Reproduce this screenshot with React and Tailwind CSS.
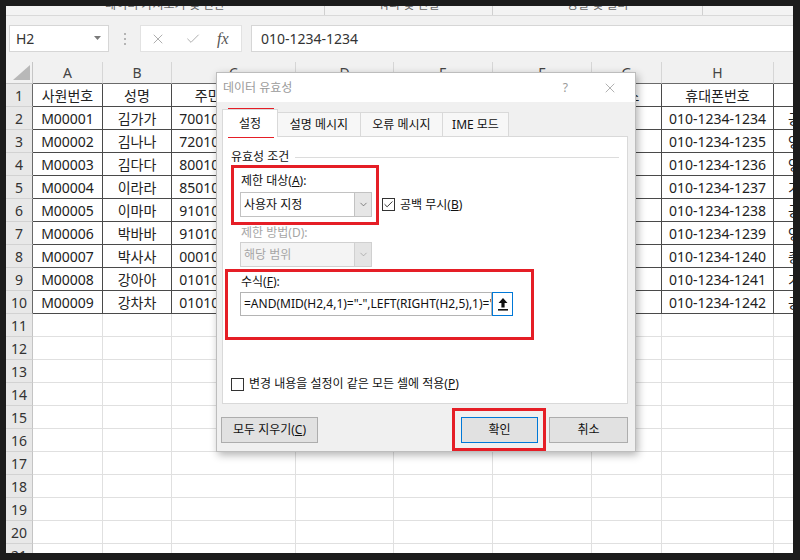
import { X, Check, ChevronDown } from 'lucide-react'

const colW = ['w-[70px]', 'w-[69px]', 'w-[124px]', 'w-[98px]', 'w-[99px]', 'w-[99px]', 'w-[70px]', 'w-[112px]', 'w-[90px]']
const letters = ['A', 'B', 'C', 'D', 'E', 'F', 'G', 'H', 'I']

const data = [
  ['사원번호', '성명', '주민등록번호', '부서', '직급', '입사일', '주소', '휴대폰번호', ''],
  ['M00001', '김가가', '700101-1234567', '', '', '', '', '010-1234-1234', '공무팀'],
  ['M00002', '김나나', '720101-2234567', '', '', '', '', '010-1234-1235', '영업팀'],
  ['M00003', '김다다', '800101-1234567', '', '', '', '', '010-1234-1236', '영업팀'],
  ['M00004', '이라라', '850101-2234567', '', '', '', '', '010-1234-1237', '기획팀'],
  ['M00005', '이마마', '910101-1234567', '', '', '', '', '010-1234-1238', '공무팀'],
  ['M00006', '박바바', '910101-2234567', '', '', '', '', '010-1234-1239', '영업팀'],
  ['M00007', '박사사', '000101-3234567', '', '', '', '', '010-1234-1240', '총무팀'],
  ['M00008', '강아아', '010101-4234567', '', '', '', '', '010-1234-1241', '기획팀'],
  ['M00009', '강차차', '010101-3234567', '', '', '', '', '010-1234-1242', '공무팀'],
]

function Grid() {
  const rows = []
  for (let r = 1; r <= 21; r++) {
    const inTable = r <= 10
    const vals = data[r - 1] || []
    rows.push(
      <div key={r} className="flex h-[23px] shrink-0">
        <div className={`w-[27px] shrink-0 bg-[#e8e8e8] border-b border-[#d2d2d2] border-r flex items-center justify-center text-[14px] text-[#333] ${inTable ? 'border-r-[#6a6a6a]' : 'border-r-[#c4c4c4]'}`}>
          {r}
        </div>
        {colW.map((w, i) => (
          <div
            key={i}
            className={`${w} shrink-0 border-r border-b flex items-center whitespace-nowrap overflow-hidden text-[14px] text-[#222] ${inTable ? 'border-[#4a4a4a]' : 'border-[#e0e0e0]'} ${i === 8 ? 'justify-start pl-[14px]' : 'justify-center'}`}
          >
            {vals[i] || ''}
          </div>
        ))}
      </div>
    )
  }

  return (
    <div className="flex flex-col">
      {/* column headers */}
      <div className="flex h-[22px] shrink-0 bg-[#f1f1f1]">
        <div className="w-[27px] shrink-0 border-r border-b border-[#c6c6c6] relative">
          <svg width="27" height="21" className="absolute left-0 top-0">
            <polygon points="24,3 24,18 7,18" fill="#b8b8b8" />
          </svg>
        </div>
        {colW.map((w, i) => (
          <div key={i} className={`${w} shrink-0 border-r border-[#d6d6d6] border-b border-b-[#6a6a6a] flex items-center justify-center text-[14px] text-[#444]`}>
            {letters[i]}
          </div>
        ))}
      </div>
      {rows}
    </div>
  )
}

function FormulaBar() {
  return (
    <div className="h-[46px] shrink-0 bg-[#f1f1f1] flex items-start pt-[9px] pl-[3px]">
      <div className="w-[100px] h-[27px] bg-white border border-[#d6d6d6] flex items-center pl-[6px] pr-[6px]">
        <span className="text-[14px] text-[#333]">H2</span>
        <svg width="8" height="5" className="ml-auto">
          <polygon points="0,0 7,0 3.5,4" fill="#7a7a7a" />
        </svg>
      </div>
      <div className="w-[31px] h-[27px] flex items-center justify-center">
        <div className="flex flex-col gap-[3px]">
          <div className="w-[2px] h-[2px] bg-[#b4b4b4]" />
          <div className="w-[2px] h-[2px] bg-[#b4b4b4]" />
          <div className="w-[2px] h-[2px] bg-[#b4b4b4]" />
        </div>
      </div>
      <div className="w-[102px] h-[27px] bg-white border border-[#e2e2e2] flex items-center">
        <X className="w-[16px] h-[16px] ml-[9px] text-[#a8a8a8]" strokeWidth={1.4} />
        <Check className="w-[16px] h-[16px] ml-[19px] text-[#a8a8a8]" strokeWidth={1.4} />
        <span className="ml-[16px] font-['Liberation_Serif',serif] italic text-[16px] text-[#555]">fx</span>
      </div>
      <div className="ml-[9px] flex-1 h-[27px] bg-white border border-[#d6d6d6] border-r-0 flex items-center pl-[9px] text-[14px] text-[#333]">
        010-1234-1234
      </div>
    </div>
  )
}

function RibbonStrip() {
  return (
    <div className="h-[10px] shrink-0 bg-[#f3f3f3] border-b border-[#d9d9d9] overflow-hidden flex text-[12px] text-[#666]">
      <div className="w-[319px] shrink-0 border-r border-[#d0d0d0] flex justify-center">
        <span className="-mt-[9px] leading-[16px]">데이터 가져오기 및 변환</span>
      </div>
      <div className="w-[168px] shrink-0 border-r border-[#d0d0d0] flex justify-center">
        <span className="-mt-[9px] leading-[16px]">쿼리 및 연결</span>
      </div>
      <div className="w-[210px] shrink-0 border-r border-[#d0d0d0] flex justify-center">
        <span className="-mt-[9px] leading-[16px]">정렬 및 필터</span>
      </div>
    </div>
  )
}

function Select({ text, disabled }) {
  return (
    <div className={`flex h-[25px] w-[132px] border ${disabled ? 'border-[#d0d0d0] bg-[#f4f4f4]' : 'border-[#c2c2c2] bg-white'}`}>
      <div className={`flex-1 flex items-center pl-[3px] ${disabled ? 'text-[#a6a6a6]' : 'text-[#111]'}`}>{text}</div>
      <div className={`w-[17px] border-l flex items-center justify-center ${disabled ? 'border-[#d0d0d0] bg-[#e4e4e4]' : 'border-[#c2c2c2] bg-[#e6e6e6]'}`}>
        <ChevronDown className={`w-[11px] h-[11px] ${disabled ? 'text-[#9a9a9a]' : 'text-[#555]'}`} strokeWidth={1.5} />
      </div>
    </div>
  )
}

function Dialog() {
  return (
    <div className="absolute left-[216px] top-[72px] w-[420px] bg-[#f0f0f0] border border-[#bdbdbd] shadow-[2px_3px_8px_rgba(0,0,0,0.3)] flex flex-col pb-[8px] text-[12px] leading-[18px] text-[#111]">
      <div className="h-[29px] bg-white flex items-center pl-[6px] text-[#9a9a9a]">
        <span>데이터 유효성</span>
        <span className="ml-auto">?</span>
        <X className="w-[16px] h-[16px] ml-[34px] mr-[17px] text-[#8a8a8a]" strokeWidth={1} />
      </div>

      {/* tabs */}
      <div className="mt-[10px] ml-[5px] flex items-end h-[24px] relative z-10">
        <div className="w-[56px] h-[28px] -mb-px bg-white border border-[#d9d9d9] border-b-0 flex items-center justify-center">설정</div>
        <div className="w-[83px] h-[24px] bg-[#f7f7f7] border-t border-r border-[#d9d9d9] flex items-center justify-center">설명 메시지</div>
        <div className="w-[82px] h-[24px] bg-[#f7f7f7] border-t border-r border-[#d9d9d9] flex items-center justify-center">오류 메시지</div>
        <div className="w-[66px] h-[24px] bg-[#f7f7f7] border-t border-r border-[#d9d9d9] flex items-center justify-center">IME 모드</div>
      </div>

      {/* panel */}
      <div className="ml-[5px] w-[406px] h-[268px] bg-white border border-[#d9d9d9] px-[8px] pt-[11px] flex flex-col">
        <div className="flex items-center">
          <span>유효성 조건</span>
          <div className="flex-1 ml-[6px] border-t border-[#dcdcdc]" />
        </div>
        <div className="mt-[6px] ml-[10px]">
          제한 대상(<span className="underline">A</span>):
        </div>
        <div className="mt-[2px] ml-[9px] flex items-center">
          <Select text="사용자 지정" />
          <div className="ml-[10px] w-[13px] h-[13px] border border-[#333] bg-white flex items-center justify-center">
            <Check className="w-[11px] h-[11px] text-[#222]" strokeWidth={2} />
          </div>
          <span className="ml-[5px]">
            공백 무시(<span className="underline">B</span>)
          </span>
        </div>
        <div className="mt-[7px] ml-[10px] text-[#a6a6a6]">
          제한 방법(D):
        </div>
        <div className="ml-[9px]">
          <Select text="해당 범위" disabled />
        </div>
        <div className="mt-[6px] ml-[10px]">
          수식(<span className="underline">F</span>):
        </div>
        <div className="mt-[1px] ml-[9px] flex h-[24px]">
          <div className="w-[252px] border border-[#b4b4b4] bg-white flex items-center pl-[3px] overflow-hidden whitespace-nowrap">
            =AND(MID(H2,4,1)="-",LEFT(RIGHT(H2,5),1)="-")
          </div>
          <div className="w-[21px] border border-[#0078d7] bg-white flex items-center justify-center">
            <svg width="12" height="14" viewBox="0 0 12 14">
              <path d="M6 1 L10.5 6 H7.6 V10.5 H4.4 V6 H1.5 Z" fill="#111" />
              <rect x="1" y="12" width="10" height="1.6" fill="#111" />
            </svg>
          </div>
        </div>
        <div className="mt-[59px] flex items-center">
          <div className="w-[13px] h-[13px] border border-[#333] bg-white" />
          <span className="ml-[5px]">
            변경 내용을 설정이 같은 모든 셀에 적용(<span className="underline">P</span>)
          </span>
        </div>
      </div>

      {/* buttons */}
      <div className="mt-[13px] flex px-[4px] pr-[7px]">
        <div className="w-[97px] h-[26px] bg-[#e1e1e1] border border-[#adadad] flex items-center justify-center">
          모두 지우기(<span className="underline">C</span>)
        </div>
        <div className="ml-auto w-[77px] h-[26px] bg-[#e1e1e1] border border-[#0078d7] flex items-center justify-center">확인</div>
        <div className="ml-[11px] w-[79px] h-[26px] bg-[#e1e1e1] border border-[#adadad] flex items-center justify-center">취소</div>
      </div>
    </div>
  )
}

export default function App() {
  return (
    <div className="relative w-[800px] h-[560px] bg-[#1c1c1c] pt-[6px] pl-[6px] font-['Noto_Sans','Noto_Sans_CJK_KR',sans-serif]">
      <div className="w-[787px] h-[547px] bg-white overflow-hidden flex flex-col">
        <RibbonStrip />
        <FormulaBar />
        <Grid />
      </div>

      <Dialog />

      {/* red highlight boxes */}
      <div className="absolute left-[228px] top-[108px] w-[46px] h-[30px] border-[3px] border-[#e51e26] pointer-events-none" />
      <div className="absolute left-[231px] top-[165px] w-[148px] h-[60px] border-[3px] border-[#e51e26] pointer-events-none" />
      <div className="absolute left-[225px] top-[269px] w-[309px] h-[71px] border-[3px] border-[#e51e26] pointer-events-none" />
      <div className="absolute left-[452px] top-[408px] w-[94px] h-[43px] border-[3px] border-[#e51e26] pointer-events-none" />
    </div>
  )
}
